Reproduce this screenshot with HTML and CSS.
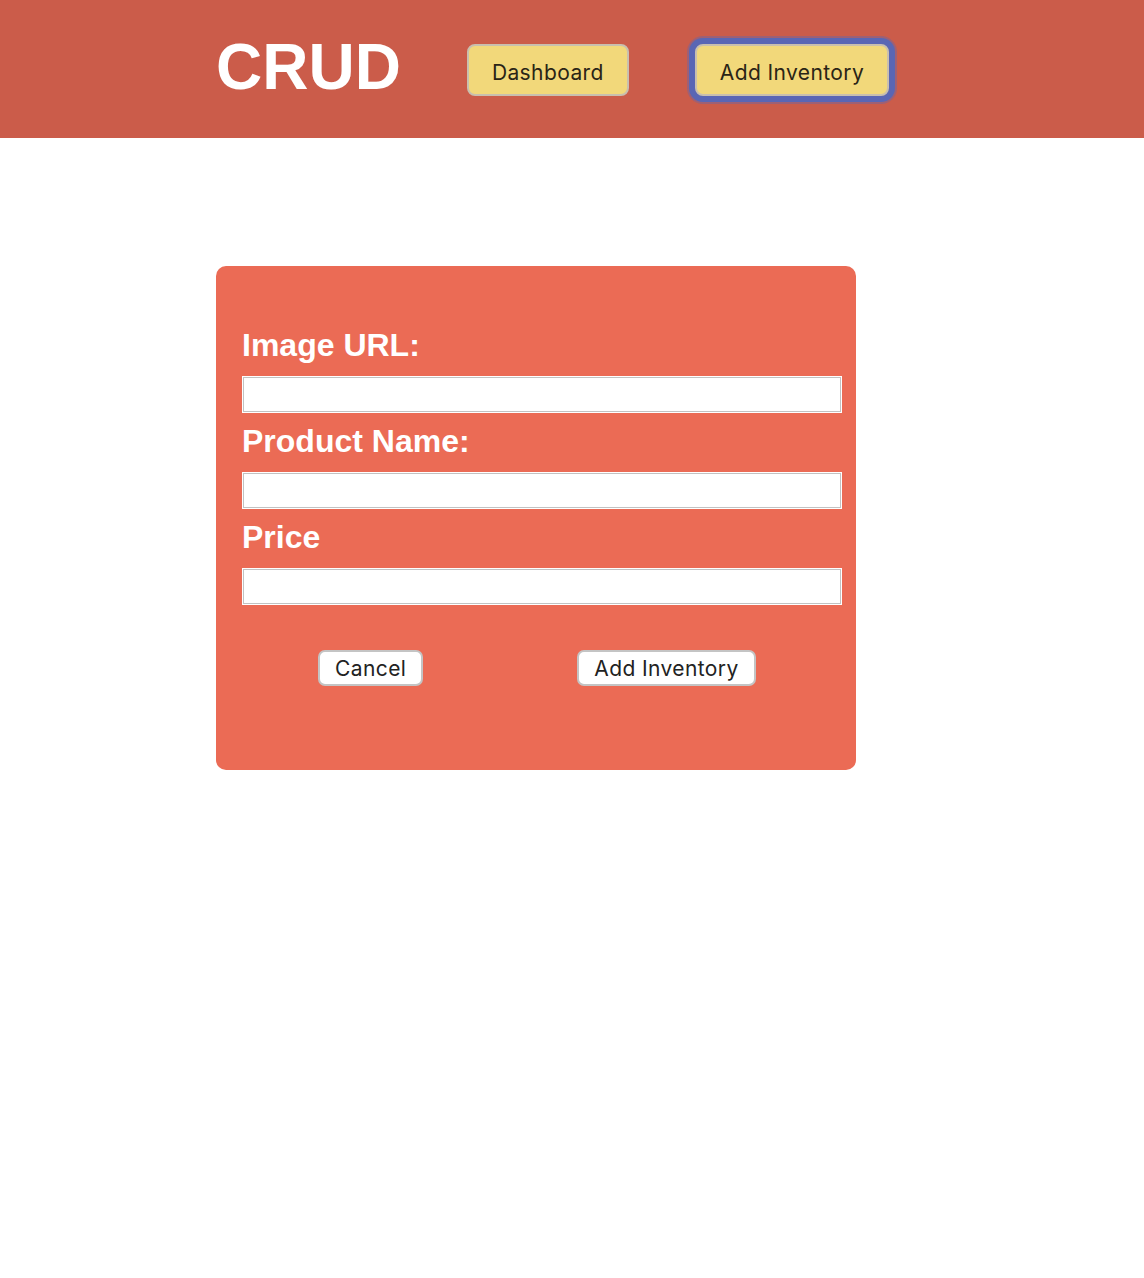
FILE: index.html
```html
<!DOCTYPE html>
<html lang="en">
<head>
	<meta charset="UTF-8">
	<title>CRUD</title>
	<link rel="stylesheet" href="styles.css">
</head>
<body>
	<header class="nav">
		<h1 class="brand">CRUD</h1>
		<button class="nav-btn">Dashboard</button>
		<button class="nav-btn active">Add Inventory</button>
	</header>
	<main class="page">
		<form class="card">
			<label class="field-label" for="img">Image URL:</label>
			<input class="field" type="text" id="img">
			<label class="field-label" for="name">Product Name:</label>
			<input class="field" type="text" id="name">
			<label class="field-label" for="price">Price</label>
			<input class="field" type="text" id="price">
			<div class="actions">
				<button type="button" class="form-btn">Cancel</button>
				<button type="button" class="form-btn">Add Inventory</button>
			</div>
		</form>
	</main>
</body>
</html>
```

FILE: styles.css
```css
body{
	margin:0;
	font-family:"Liberation Sans", Arial, sans-serif;
	background:#fff;
}
.nav{
	height:138px;
	background:#cb5c4a;
	display:flex;
	align-items:center;
	padding-left:216px;
	gap:66px;
	box-sizing:border-box;
}
.brand{
	margin:0 0 4px 0;
	color:#fff;
	font-size:64px;
	font-weight:bold;
	line-height:1;
}
.nav-btn{
	height:52px;
	padding:4px 23px 0;
	background:#f2d87a;
	border:2px solid #c9bfae;
	border-radius:8px;
	font-family:Inter, "Noto Sans", sans-serif;
	font-size:21px;
	letter-spacing:.4px;
	color:#2a2416;
	margin-top:2px;
}
.nav-btn.active{
	box-shadow:0 0 0 6px #5a66b4, 0 0 0 8px rgba(90,102,180,.4);
}
.page{
	padding:128px 0 0 216px;
}
.card{
	width:640px;
	height:504px;
	box-sizing:border-box;
	background:#eb6b55;
	border-radius:10px;
	padding:61px 14px 0 26px;
	display:flex;
	flex-direction:column;
}
.field-label{
	color:#fff;
	font-size:32px;
	font-weight:bold;
	line-height:37px;
	margin-bottom:12px;
}
.field{
	width:600px;
	height:37px;
	box-sizing:border-box;
	margin:0 0 10px 0;
	border:1px solid #fff;
	box-shadow:inset 0 0 0 1px #c2c2c2;
	background:#fff;
	padding:0 6px;
	font-size:16px;
}
.actions{
	display:flex;
	gap:154px;
	padding-left:76px;
	margin-top:35px;
}
.form-btn{
	height:36px;
	padding:0 15px;
	background:#fff;
	border:2px solid #c4c4c4;
	border-radius:7px;
	font-family:Inter, "Noto Sans", sans-serif;
	font-size:21px;
	letter-spacing:.4px;
	color:#222;
}
```
